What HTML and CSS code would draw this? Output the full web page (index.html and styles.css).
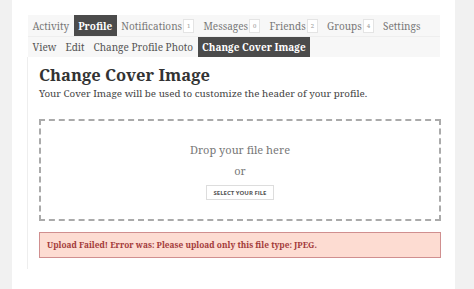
FILE: index.html
```html
<!DOCTYPE html>
<html lang="en">

<head>
    <meta charset="utf-8">
    <title>Change Cover Image</title>
    <link rel="stylesheet" href="styles.css">
</head>

<body>
    <div class="page">
        <nav class="tabs">
            <a href="#">Activity</a>
            <a href="#" class="current">Profile</a>
            <a href="#">Notifications <span class="count">1</span></a>
            <a href="#">Messages <span class="count">0</span></a>
            <a href="#">Friends <span class="count">2</span></a>
            <a href="#">Groups <span class="count">4</span></a>
            <a href="#">Settings</a>
        </nav>
        <nav class="subtabs">
            <a href="#">View</a>
            <a href="#">Edit</a>
            <a href="#">Change Profile Photo</a>
            <a href="#" class="current">Change Cover Image</a>
        </nav>

        <div class="body">
            <h2>Change Cover Image</h2>
            <p class="intro">Your Cover Image will be used to customize the header of your profile.</p>

            <div class="dropzone">
                <p class="drop">Drop your file here</p>
                <p class="or">or</p>
                <button class="select">SELECT YOUR FILE</button>
            </div>

            <div class="error">Upload Failed! Error was: Please upload only this file type: JPEG.</div>
        </div>
    </div>
</body>

</html>
```

FILE: styles.css
```css
body {
    margin: 0;
    background-color: #f1f1f1;
    font-family: "Noto Serif", "DejaVu Serif", serif;
    color: #333;
}

.page {
    background-color: white;
    width: 443px;
    height: 289px;
    margin-left: 12px;
    padding: 15px 0 0 16px;
    box-sizing: border-box;
}

.tabs,
.subtabs {
    display: flex;
    width: 412px;
    background-color: #f7f7f7;
    font-size: 10px;
}

.tabs {
    height: 21px;
    border-bottom: 1px solid #eee;
}

.subtabs {
    height: 20px;
}

.tabs a,
.subtabs a {
    color: #777;
    text-decoration: none;
    padding: 0 4.5px;
    display: flex;
    align-items: center;
}

.subtabs a {
    color: #555;
}

.tabs a.current,
.subtabs a.current {
    background-color: #4b4b4b;
    color: white;
    font-weight: bold;
}

.count {
    font-size: 6px;
    border: 1px solid #e4e4e4;
    background-color: white;
    color: #999;
    padding: 2px 3px;
    margin-left: 1px;
    line-height: 8px;
}

.body {
    border-left: 1px solid #eee;
    margin-left: -1px;
    padding: 6px 0 11px 11px;
    width: 402px;
}

h2 {
    margin: 0;
    font-size: 16.5px;
    line-height: 24px;
    color: #333;
}

.intro {
    margin: 0;
    font-size: 9.8px;
    line-height: 14px;
    color: #444;
}

.dropzone {
    margin-top: 18px;
    border: 2px dashed #aaa;
    height: 102px;
    box-sizing: border-box;
    display: flex;
    flex-direction: column;
    align-items: center;
    padding-top: 20px;
}

.drop {
    margin: 0;
    font-size: 11px;
    color: #777;
    line-height: 18px;
}

.or {
    margin: 3px 0 0;
    font-size: 11px;
    color: #777;
    line-height: 18px;
}

.select {
    margin-top: 5px;
    font-family: "Open Sans", sans-serif;
    font-size: 6px;
    font-weight: bold;
    color: #555;
    background-color: white;
    border: 1px solid #ddd;
    height: 15px;
    padding: 0 7px;
}

.error {
    margin-top: 11px;
    background-color: #fddcd2;
    border: 1px solid #d08f8f;
    color: #a33a3a;
    font-weight: bold;
    font-size: 8.3px;
    height: 26px;
    line-height: 24px;
    padding-left: 7px;
    box-sizing: border-box;
}
```
